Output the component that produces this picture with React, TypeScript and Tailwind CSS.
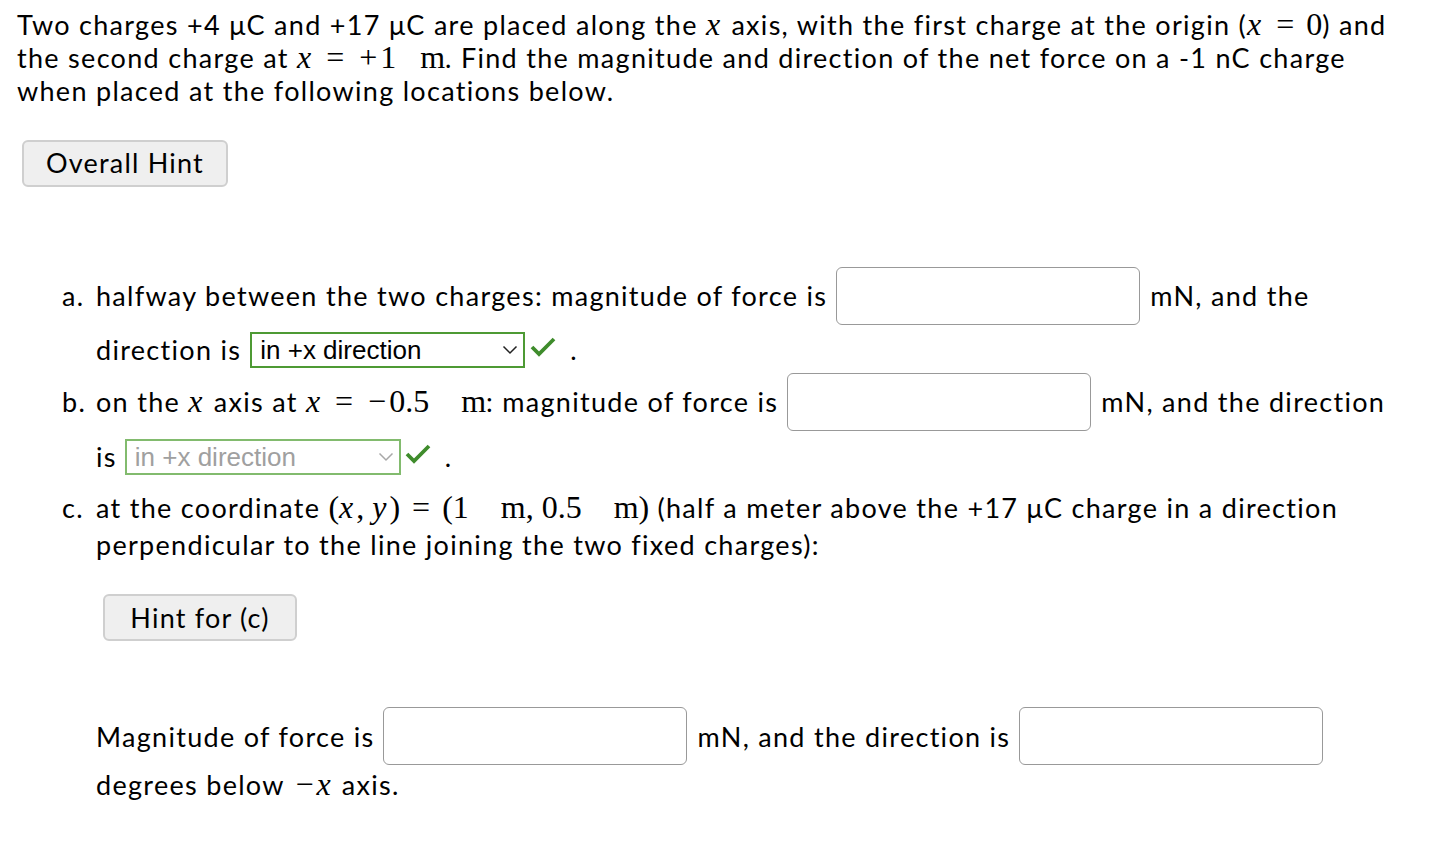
import React from 'react';

const M = ({ children }: { children: React.ReactNode }) => (
  <span className="font-['Liberation_Serif',serif] text-[32px] leading-none tracking-normal">{children}</span>
);
const V = ({ children }: { children: React.ReactNode }) => <i className="pr-[3px]">{children}</i>;
const Eq = () => <span className="mx-[9px] inline-block w-[24px] text-center">=</span>;
const Op = ({ c }: { c: string }) => <span className="inline-block w-[24px] text-center">{c}</span>;

function Box({ className = '' }: { className?: string }) {
  return (
    <span
      className={`inline-block h-[58px] w-[304px] shrink-0 rounded-[6px] border-[1.5px] border-[#999] bg-white ${className}`}
    />
  );
}

function Check() {
  return (
    <span className="mt-[-6px] shrink-0 self-start">
      <svg width="26" height="22" viewBox="0 0 26 22">
        <path d="M2 11 L9 18 L24 3" fill="none" stroke="#3f8c2c" strokeWidth="3.8" />
      </svg>
    </span>
  );
}

function Picked({ dim = false, width }: { dim?: boolean; width: string }) {
  return (
    <span
      className={`flex h-[36px] ${width} shrink-0 items-center justify-between border-2 bg-white pl-[8px] pr-[5px] font-['Liberation_Sans',sans-serif] text-[26px] tracking-normal ${
        dim ? 'border-[#82bb6e] text-[#a0a0a0]' : 'border-[#4e9a34] text-black'
      }`}
    >
      <span>in +x direction</span>
      <svg width="16" height="10" viewBox="0 0 16 10">
        <path d="M1.5 1.5 L8 8 L14.5 1.5" fill="none" stroke={dim ? '#a8a8a8' : '#222'} strokeWidth="1.5" />
      </svg>
    </span>
  );
}

export default function App() {
  return (
    <div className="min-h-screen bg-white font-['Lato',sans-serif] text-[27px] tracking-[1.3px] text-black">
      <div className="px-[17px] pt-[8px]">
        <p className="leading-[33px]">
          Two charges +4 μC and +17 μC are placed along the <M><V>x</V></M> axis, with the first charge at the origin (
          <M>
            <V>x</V><Eq />0
          </M>
          ) and
          <br />
          the second charge at{' '}
          <M>
            <V>x</V><Eq /><Op c="+" />1&nbsp;&nbsp;&nbsp;m
          </M>
          . Find the magnitude and direction of the net force on a -1 nC charge
          <br />
          when placed at the following locations below.
        </p>

        <button className="ml-[5px] mt-[33px] flex h-[47px] w-[206px] items-center justify-center rounded-[6px] border-2 border-[#cfcfcf] bg-[#efefef] tracking-[1.2px]">
          Overall Hint
        </button>

        <div className="mt-[80px] pl-[45px]">
          {/* a */}
          <div className="flex h-[58px] items-center">
            <span className="w-[34px] shrink-0">a.</span>
            <span>halfway between the two charges: magnitude of force is</span>
            <Box className="ml-[9px] mr-[10px]" />
            <span>mN, and the</span>
          </div>
          <div className="mt-[7px] flex h-[36px] items-center pl-[34px]">
            <span className="mr-[9px]">direction is</span>
            <Picked width="w-[275px]" />
            <span className="ml-[5px] flex"><Check /></span>
            <span className="ml-[14px]">.</span>
          </div>

          {/* b */}
          <div className="mt-[5px] flex h-[58px] items-center">
            <span className="w-[34px] shrink-0">b.</span>
            <span>
              on the <M><V>x</V></M> axis at{' '}
              <M>
                <V>x</V><Eq /><Op c="−" />0.5&nbsp;&nbsp;&nbsp;&nbsp;m
              </M>
              : magnitude of force is
            </span>
            <Box className="ml-[9px] mr-[10px]" />
            <span>mN, and the direction</span>
          </div>
          <div className="mt-[8px] flex h-[36px] items-center pl-[34px]">
            <span className="mr-[8px]">is</span>
            <Picked dim width="w-[276px]" />
            <span className="ml-[4px] flex"><Check /></span>
            <span className="ml-[14px]">.</span>
          </div>

          {/* c */}
          <div className="mt-[14px] flex leading-[37px]">
            <span className="w-[34px] shrink-0">c.</span>
            <div>
              <div>
                at the coordinate{' '}
                <M>
                  (<V>x</V>,&nbsp;<V>y</V>)<Eq />(1&nbsp;&nbsp;&nbsp;&nbsp;m,&nbsp;0.5&nbsp;&nbsp;&nbsp;&nbsp;m)
                </M>{' '}
                (half a meter above the +17 μC charge in a direction
              </div>
              <div>perpendicular to the line joining the two fixed charges):</div>

              <button className="ml-[7px] mt-[31px] flex h-[47px] w-[194px] items-center justify-center rounded-[6px] border-2 border-[#cfcfcf] bg-[#efefef] tracking-[1.2px]">
                Hint for (c)
              </button>

              <div className="mt-[66px] flex h-[58px] items-center">
                <span>Magnitude of force is</span>
                <Box className="ml-[9px] mr-[10px]" />
                <span>mN, and the direction is</span>
                <Box className="ml-[9px]" />
              </div>
              <div className="mt-[3px] leading-[33px]">
                degrees below{' '}
                <M>
                  <Op c="−" />
                  <V>x</V>
                </M>{' '}
                axis.
              </div>
            </div>
          </div>
        </div>
      </div>
    </div>
  );
}
